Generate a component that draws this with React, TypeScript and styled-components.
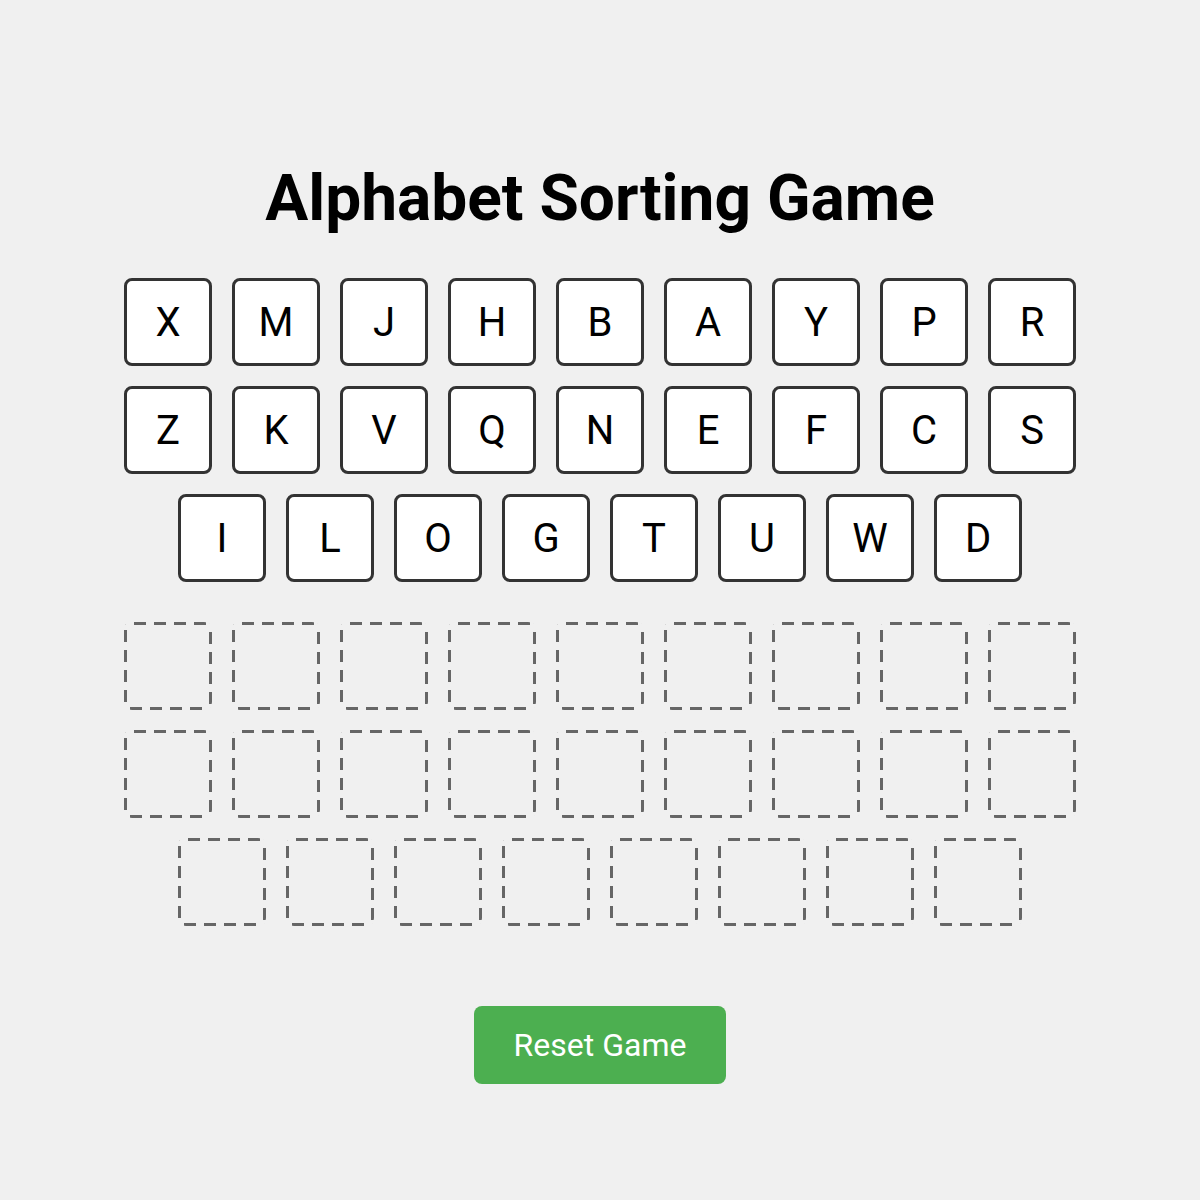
import React from "react";
import styled, { createGlobalStyle } from "styled-components";

const GlobalStyle = createGlobalStyle`
  html, body {
    margin: 0;
    padding: 0;
    background: #f0f0f0;
  }
  body {
    font-family: Roboto, "Liberation Sans", Arial, sans-serif;
  }
`;

const Page = styled.main`
  display: flex;
  flex-direction: column;
  align-items: center;
  min-height: 1200px;
  padding-top: 167px;
  box-sizing: border-box;
`;

const Title = styled.h1`
  margin: 0 0 47px;
  font-size: 64px;
  line-height: 1;
  font-weight: 700;
  color: #000;
`;

const Board = styled.div<{ $after: number }>`
  display: flex;
  flex-wrap: wrap;
  justify-content: center;
  gap: 20px;
  width: 952px;
  margin-bottom: ${(p) => p.$after}px;
`;

const Tile = styled.div`
  box-sizing: border-box;
  width: 88px;
  height: 88px;
  display: flex;
  align-items: center;
  justify-content: center;
  background: #fff;
  border: 3px solid #333;
  border-radius: 8px;
  font-size: 40px;
  color: #000;
  user-select: none;
  cursor: grab;
`;

/* Long dashes (12px on, 8px off) drawn as gradient strips along each edge,
   clipped to the rounded outline. The offset sets where the first dash starts. */
const dash = (angle: number, offset: number) =>
  `repeating-linear-gradient(${angle}deg, #666 ${offset}px ${offset + 12}px, transparent ${offset + 12}px ${offset + 20}px)`;

const Slot = styled.div`
  box-sizing: border-box;
  width: 88px;
  height: 88px;
  border-radius: 8px;
  background:
    ${dash(90, 10)} 0 0 / 100% 3px no-repeat,
    ${dash(90, 6)} 0 100% / 100% 3px no-repeat,
    ${dash(180, 8)} 0 0 / 3px 100% no-repeat,
    ${dash(180, 10)} 100% 0 / 3px 100% no-repeat;
`;

const ResetButton = styled.button`
  width: 252px;
  height: 78px;
  padding: 0;
  border: none;
  border-radius: 8px;
  background: #4caf50;
  color: #fff;
  font-family: Roboto, "Liberation Sans", Arial, sans-serif;
  font-size: 32px;
  cursor: pointer;
`;

const shuffled = "XMJHBAYPRZKVQNEFCSILOGTUWD".split("");

export default function App() {
  return (
    <>
      <GlobalStyle />
      <Page>
        <Title>Alphabet Sorting Game</Title>
        <Board $after={40}>
          {shuffled.map((l) => (
            <Tile key={l}>{l}</Tile>
          ))}
        </Board>
        <Board $after={80}>
          {shuffled.map((_, i) => (
            <Slot key={i} />
          ))}
        </Board>
        <ResetButton>Reset Game</ResetButton>
      </Page>
    </>
  );
}
